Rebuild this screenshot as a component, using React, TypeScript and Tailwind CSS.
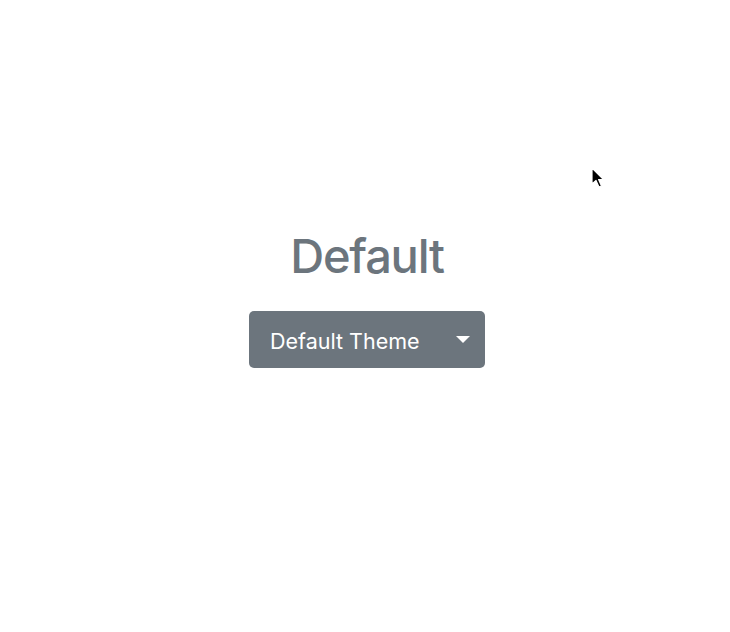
import React from "react";

export default function App() {
  return (
    <div className="relative w-[730px] h-[632px] bg-white overflow-hidden" style={{ fontFamily: "Inter, 'Noto Sans', sans-serif" }}>
      <div className="flex flex-col items-center pt-[227px] pl-[4px]">
        <h1 className="text-[47px] leading-[58px] font-medium text-[#6c757d] tracking-[-1.2px]">Default</h1>
        <button className="mt-[26px] flex items-center w-[236px] h-[57px] rounded-[5px] bg-[#6c757d] text-white text-[21.5px] pl-[21px] pr-[15px] pt-[3px]">
          <span>Default Theme</span>
          <span className="ml-auto mb-[3px] block w-0 h-0 border-l-[7px] border-r-[7px] border-t-[7px] border-l-transparent border-r-transparent border-t-white" />
        </button>
      </div>
      <svg className="absolute left-[590px] top-[167px]" width="16" height="24" viewBox="0 0 16 24">
        <path d="M2 1 L2 17 L6 13.5 L9 20 L11.5 19 L8.6 12.6 L13.5 12.6 Z" fill="#000" stroke="#fff" strokeWidth="1.2" strokeLinejoin="round" />
      </svg>
    </div>
  );
}
